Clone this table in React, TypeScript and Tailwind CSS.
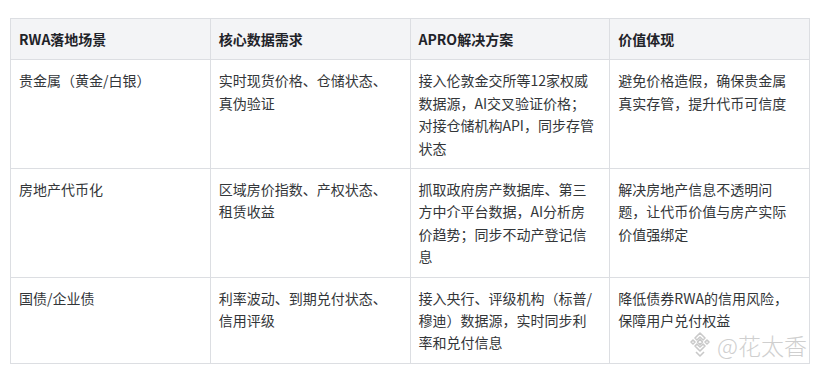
const rows = [
  {
    scene: "贵金属（黄金/白银）",
    need: "实时现货价格、仓储状态、真伪验证",
    plan: "接入伦敦金交所等12家权威数据源，AI交叉验证价格；对接仓储机构API，同步存管状态",
    value: "避免价格造假，确保贵金属真实存管，提升代币可信度",
  },
  {
    scene: "房地产代币化",
    need: "区域房价指数、产权状态、租赁收益",
    plan: "抓取政府房产数据库、第三方中介平台数据，AI分析房价趋势；同步不动产登记信息",
    value: "解决房地产信息不透明问题，让代币价值与房产实际价值强绑定",
  },
  {
    scene: "国债/企业债",
    need: "利率波动、到期兑付状态、信用评级",
    plan: "接入央行、评级机构（标普/穆迪）数据源，实时同步利率和兑付信息",
    value: "降低债券RWA的信用风险，保障用户兑付权益",
  },
]

const headers = ["RWA落地场景", "核心数据需求", "APRO解决方案", "价值体现"]

const BinanceMark = () => (
  <svg width="24" height="28" viewBox="0 0 24 28" fill="none" stroke="#c9c9c9" strokeWidth="1.6" strokeLinejoin="round">
    <path d="M12 2 L17 7 L15 9 L12 6 L9 9 L7 7 Z" />
    <path d="M3 11 L5 9 L7 11 L5 13 Z" />
    <path d="M21 11 L19 9 L17 11 L19 13 Z" />
    <path d="M12 8.5 L14.5 11 L12 13.5 L9.5 11 Z" />
    <path d="M7 15 L9 13 L12 16 L15 13 L17 15 L12 20 Z" />
    <path d="M8 21 L12 25 L16 21" />
  </svg>
)

export default function App() {
  return (
    <div className="relative bg-white w-[821px] h-[373px] pt-[18px] pl-[10px] text-[14px] leading-[1.6]" style={{ fontFamily: '"Noto Sans CJK SC", "Noto Sans", sans-serif' }}>
      <table className="w-[800px] table-fixed border-collapse border border-[#dcdee2]">
        <thead>
          <tr className="bg-[#f3f4f6]">
            {headers.map((h) => (
              <th key={h} className="border border-[#dcdee2] pl-[8px] pr-[14px] py-[9px] text-left font-bold text-[#1f2329]">
                {h}
              </th>
            ))}
          </tr>
        </thead>
        <tbody>
          {rows.map((r) => (
            <tr key={r.scene}>
              {[r.scene, r.need, r.plan, r.value].map((c, i) => (
                <td key={i} className="border border-[#dcdee2] pl-[8px] pr-[14px] py-[9px] align-top text-[#333639]">
                  {c}
                </td>
              ))}
            </tr>
          ))}
        </tbody>
      </table>

      <div className="absolute left-[688px] top-[331px] flex items-center gap-[5px] text-[#cfcfcf]">
        <BinanceMark />
        <span className="text-[23px] font-light leading-none [text-shadow:0_0_2px_#fff]">@花太香</span>
      </div>
    </div>
  )
}
